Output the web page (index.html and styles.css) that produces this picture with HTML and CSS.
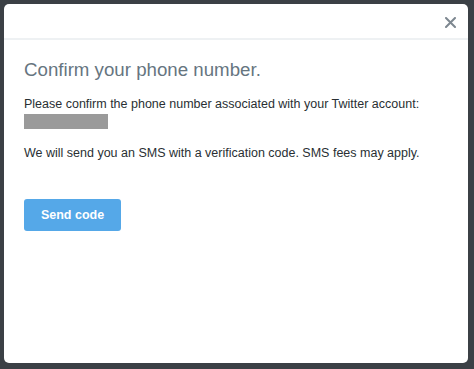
FILE: index.html
```html
<!DOCTYPE html>
<html>
<head>
<meta charset="utf-8">
<link rel="stylesheet" href="styles.css">
</head>
<body>
<div class="dialog">
  <div class="header">
    <button class="close" aria-label="Close">
      <svg width="11" height="11" viewBox="0 0 11 11"><path d="M1 1L10 10M10 1L1 10" stroke="#7d8790" stroke-width="2" stroke-linecap="round"/></svg>
    </button>
  </div>
  <div class="body">
    <h2 class="title">Confirm your phone number.</h2>
    <p class="text">Please confirm the phone number associated with your Twitter account:</p>
    <div class="redacted"></div>
    <p class="text second">We will send you an SMS with a verification code. SMS fees may apply.</p>
    <button class="btn">Send code</button>
  </div>
</div>
</body>
</html>
```
FILE: styles.css
```css
html, body {
  margin: 0;
  padding: 0;
  background: #3b4045;
  width: 474px;
  height: 369px;
  overflow: hidden;
  font-family: "Liberation Sans", Arial, sans-serif;
}
body {
  padding: 4px 6px 6px 4px;
  box-sizing: border-box;
}
.dialog {
  width: 464px;
  height: 359px;
  background: #fff;
  border-radius: 5px;
  box-sizing: border-box;
}
.header {
  height: 34px;
  border-bottom: 2px solid #eef1f3;
  display: flex;
  justify-content: flex-end;
  align-items: center;
  padding-right: 12px;
}
.close {
  border: 0;
  background: none;
  padding: 0;
  width: 11px;
  height: 11px;
  display: block;
  margin-top: 2px;
}
.close svg { display: block; }
.body {
  padding: 18px 20px 0 20px;
}
.title {
  margin: 0;
  font-weight: normal;
  font-size: 18.7px;
  line-height: 24px;
  color: #66757f;
}
.text {
  margin: 0;
  font-size: 12.5px;
  line-height: 16px;
  color: #292f33;
}
.title + .text { margin-top: 14px; }
.redacted {
  width: 84px;
  height: 15px;
  background: #9a9a9a;
  margin-top: 2px;
}
.second { margin-top: 16px; }
.btn {
  margin-top: 38px;
  width: 97px;
  height: 32px;
  border: 0;
  border-radius: 3px;
  background: #55a8e8;
  color: #fff;
  font-family: "Liberation Sans", Arial, sans-serif;
  font-weight: bold;
  font-size: 12.5px;
  padding: 0;
}
```
